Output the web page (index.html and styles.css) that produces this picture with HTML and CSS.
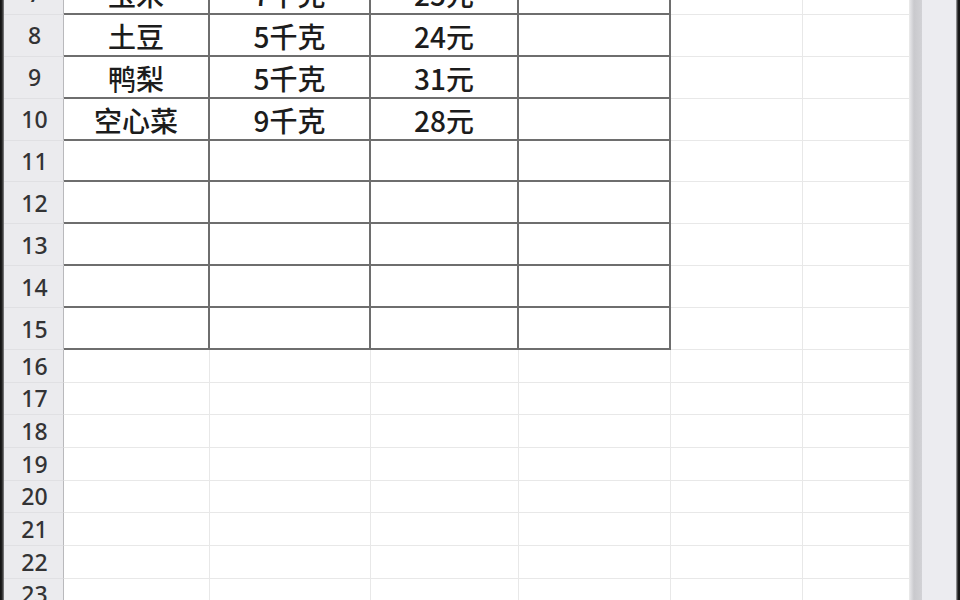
FILE: index.html
```html
<!DOCTYPE html>
<html lang="zh">
<head>
<meta charset="utf-8">
<title>Sheet</title>
<link rel="stylesheet" href="styles.css">
</head>
<body>
<div class="screen">
  <div class="edge"></div>
  <div class="viewport">
    <div class="sheet">
      <div class="rh">7</div><div class="c b">玉米</div><div class="c b">7千克</div><div class="c b">25元</div><div class="c b"></div><div class="c"></div><div class="c"></div>
      <div class="rh">8</div><div class="c b">土豆</div><div class="c b">5千克</div><div class="c b">24元</div><div class="c b"></div><div class="c"></div><div class="c"></div>
      <div class="rh">9</div><div class="c b">鸭梨</div><div class="c b">5千克</div><div class="c b">31元</div><div class="c b"></div><div class="c"></div><div class="c"></div>
      <div class="rh">10</div><div class="c b">空心菜</div><div class="c b">9千克</div><div class="c b">28元</div><div class="c b"></div><div class="c"></div><div class="c"></div>
      <div class="rh">11</div><div class="c b"></div><div class="c b"></div><div class="c b"></div><div class="c b"></div><div class="c"></div><div class="c"></div>
      <div class="rh">12</div><div class="c b"></div><div class="c b"></div><div class="c b"></div><div class="c b"></div><div class="c"></div><div class="c"></div>
      <div class="rh">13</div><div class="c b"></div><div class="c b"></div><div class="c b"></div><div class="c b"></div><div class="c"></div><div class="c"></div>
      <div class="rh">14</div><div class="c b"></div><div class="c b"></div><div class="c b"></div><div class="c b"></div><div class="c"></div><div class="c"></div>
      <div class="rh">15</div><div class="c b"></div><div class="c b"></div><div class="c b"></div><div class="c b"></div><div class="c"></div><div class="c"></div>
      <div class="rh">16</div><div class="c"></div><div class="c"></div><div class="c"></div><div class="c"></div><div class="c"></div><div class="c"></div>
      <div class="rh">17</div><div class="c"></div><div class="c"></div><div class="c"></div><div class="c"></div><div class="c"></div><div class="c"></div>
      <div class="rh">18</div><div class="c"></div><div class="c"></div><div class="c"></div><div class="c"></div><div class="c"></div><div class="c"></div>
      <div class="rh">19</div><div class="c"></div><div class="c"></div><div class="c"></div><div class="c"></div><div class="c"></div><div class="c"></div>
      <div class="rh">20</div><div class="c"></div><div class="c"></div><div class="c"></div><div class="c"></div><div class="c"></div><div class="c"></div>
      <div class="rh">21</div><div class="c"></div><div class="c"></div><div class="c"></div><div class="c"></div><div class="c"></div><div class="c"></div>
      <div class="rh">22</div><div class="c"></div><div class="c"></div><div class="c"></div><div class="c"></div><div class="c"></div><div class="c"></div>
      <div class="rh">23</div><div class="c"></div><div class="c"></div><div class="c"></div><div class="c"></div><div class="c"></div><div class="c"></div>
    </div>
  </div>
  <div class="scroll">
    <div class="track-shade"></div>
    <div class="track"></div>
    <div class="rim"></div>
  </div>
</div>
</body>
</html>
```

FILE: styles.css
```css
* { box-sizing: border-box; }
html, body {
  margin: 0;
  padding: 0;
  width: 960px;
  height: 600px;
  overflow: hidden;
  background: #ffffff;
}
.screen {
  display: flex;
  width: 960px;
  height: 600px;
  overflow: hidden;
}
.edge {
  width: 4px;
  flex: none;
  background: linear-gradient(to right, #111 0, #222 2px, #8a8a8c 4px);
}
.viewport {
  width: 906px;
  flex: none;
  height: 600px;
  overflow: hidden;
  background: #fff;
}
.sheet {
  display: grid;
  grid-template-columns: 60px 146px 161px 148px 152px 132px 107px;
  grid-template-rows: repeat(9, 41.9px) repeat(8, 32.65px);
  margin-top: -27px;
  font-family: "Noto Sans CJK SC", "Noto Sans", sans-serif;
}
.rh {
  background: #ebebee;
  border-right: 1px solid #b9b9bc;
  border-bottom: 1px solid #e0e0e3;
  color: #333335;
  font-family: "Noto Sans", "Open Sans", sans-serif;
  font-size: 23px;
  font-weight: 500;
  display: flex;
  align-items: center;
  justify-content: center;
  padding-left: 2px;
}
.c {
  border-right: 1px solid #e8e8e8;
  border-bottom: 1px solid #e8e8e8;
  display: flex;
  align-items: center;
  justify-content: center;
  font-size: 28px;
  font-weight: 500;
  color: #1c1c1c;
  line-height: 1;
  padding-top: 2px;
}
.c.b {
  border-right: 2px solid #6e6e6e;
  border-bottom: 2px solid #6e6e6e;
}
.scroll {
  flex: 1;
  display: flex;
  height: 600px;
}
.track-shade {
  width: 12px;
  background: linear-gradient(to right, #e4e4e7 0, #c9c9cd 4px, #d2d2d6 12px);
}
.track {
  flex: 1;
  background: #ececf0;
}
.rim {
  width: 4px;
  background: linear-gradient(to right, #b0b0b3 0, #1a1a1a 2px, #111 4px);
}
```
